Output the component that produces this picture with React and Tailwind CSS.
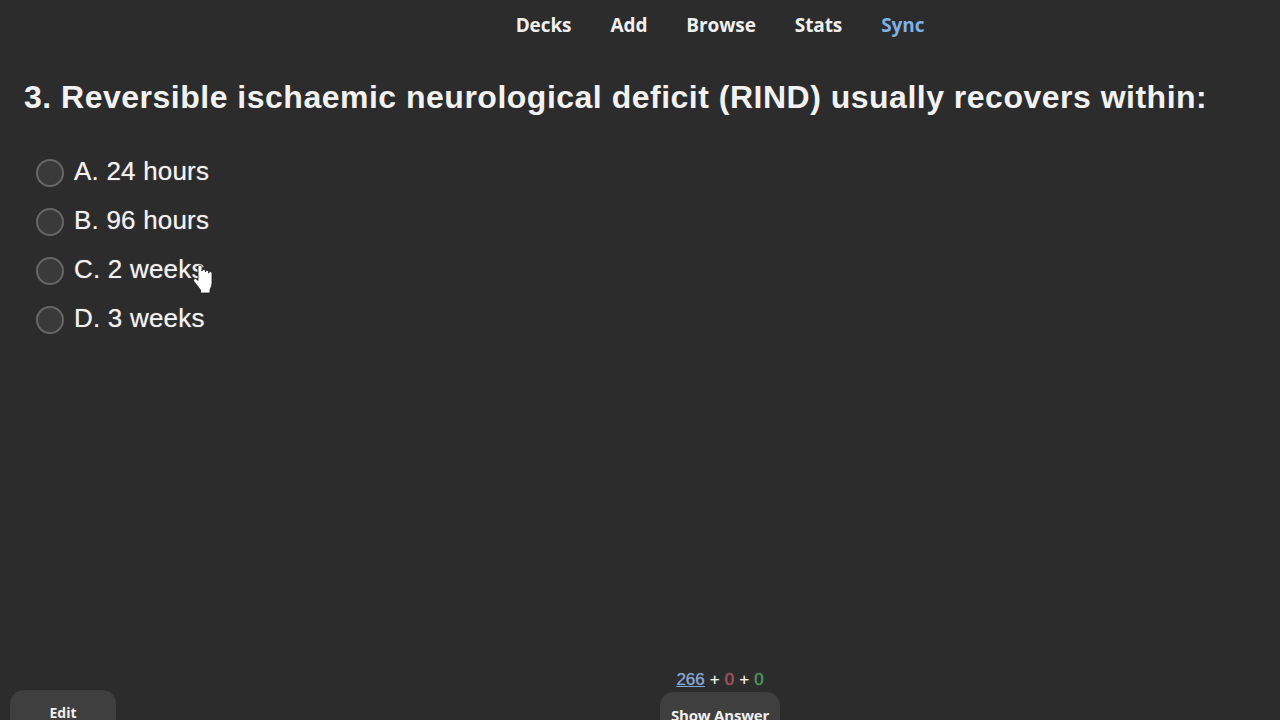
import React from 'react';

const options = ['A. 24 hours', 'B. 96 hours', 'C. 2 weeks', 'D. 3 weeks'];
const navLinks = ['Decks', 'Add', 'Browse', 'Stats'];

function HandCursor() {
  return (
    <svg className="absolute left-[192px] top-[264px]" width="24" height="30" viewBox="0 0 24 30">
      <path
        d="M6 3c0-2.400 4-2.400 4 0v4c0-2 3.500-2 3.500 0v1c0-2 3.200-2 3.200 0v1.200c0-2 3.300-2 3.300 0V19c0 3-1 4.500-2 6.500V29H8.500v-3C6.500 23 4 20.500 2 17.500c-1.200-2 1-3.800 2.500-2.500L6 16.500z"
        fill="#ffffff"
        stroke="#1c1c1c"
        strokeWidth="0.8"
      />
    </svg>
  );
}

export default function App() {
  return (
    <div className="relative h-[720px] w-[1280px] overflow-hidden bg-[#2c2c2c] font-['Liberation_Sans',sans-serif] text-[#f2f2f2]">
      <HandCursor />

      {/* Top nav */}
      <nav className="flex h-[50px] items-center justify-center gap-[39px] pl-[160px] font-['Open_Sans',sans-serif] text-[19px] font-bold tracking-[-0.1px]">
        {navLinks.map(link => (
          <span key={link} className="text-[#f0f0f0]">{link}</span>
        ))}
        <span className="text-[#7fb0e8]">Sync</span>
      </nav>

      {/* Question */}
      <main className="h-[620px] pl-[24px] pt-[27px]">
        <h1 className="text-[32px] font-bold leading-[40px] tracking-[0.5px]">
          3. Reversible ischaemic neurological deficit (RIND) usually recovers within:
        </h1>
        <ul className="mt-[39px] flex flex-col gap-[19px] pl-[12px]">
          {options.map(opt => (
            <li key={opt} className="flex h-[30px] items-center gap-[10px]">
              <span className="mt-[4px] h-[28px] w-[28px] rounded-full border-2 border-[#666666] bg-[#3a3a3a]" />
              <span className="text-[26px] leading-[30px] tracking-[0.2px] [text-shadow:0_0_1px_#ffffff80]">{opt}</span>
            </li>
          ))}
        </ul>
      </main>

      {/* Bottom bar */}
      <footer className="flex h-[100px] font-['Open_Sans',sans-serif] text-[14px] font-bold">
        <div className="w-[116px] shrink-0 pl-[10px] pt-[20px]">
          <button className="flex h-[50px] w-[106px] justify-center rounded-[14px] bg-[#3f3f3f] pt-[13px] leading-[20px] text-[#f0f0f0]">
            Edit
          </button>
        </div>
        <div className="flex w-[1208px] shrink-0 flex-col items-center">
          <div className="flex h-[18px] items-center gap-[5px] pt-[1px] font-['Liberation_Sans',sans-serif] text-[17px] font-normal leading-[18px] [text-shadow:0_0_1px_#ffffff60]">
            <span className="text-[#7fa8de] underline">266</span>
            <span>+</span>
            <span className="text-[#a8475a]">0</span>
            <span>+</span>
            <span className="text-[#3f9a4f]">0</span>
          </div>
          <button className="mt-[4px] flex h-[50px] w-[120px] justify-center rounded-[14px] bg-[#3f3f3f] pt-[13px] text-[15px] leading-[20px] tracking-[-0.2px] text-[#f0f0f0]">
            Show Answer
          </button>
        </div>
      </footer>
    </div>
  );
}
